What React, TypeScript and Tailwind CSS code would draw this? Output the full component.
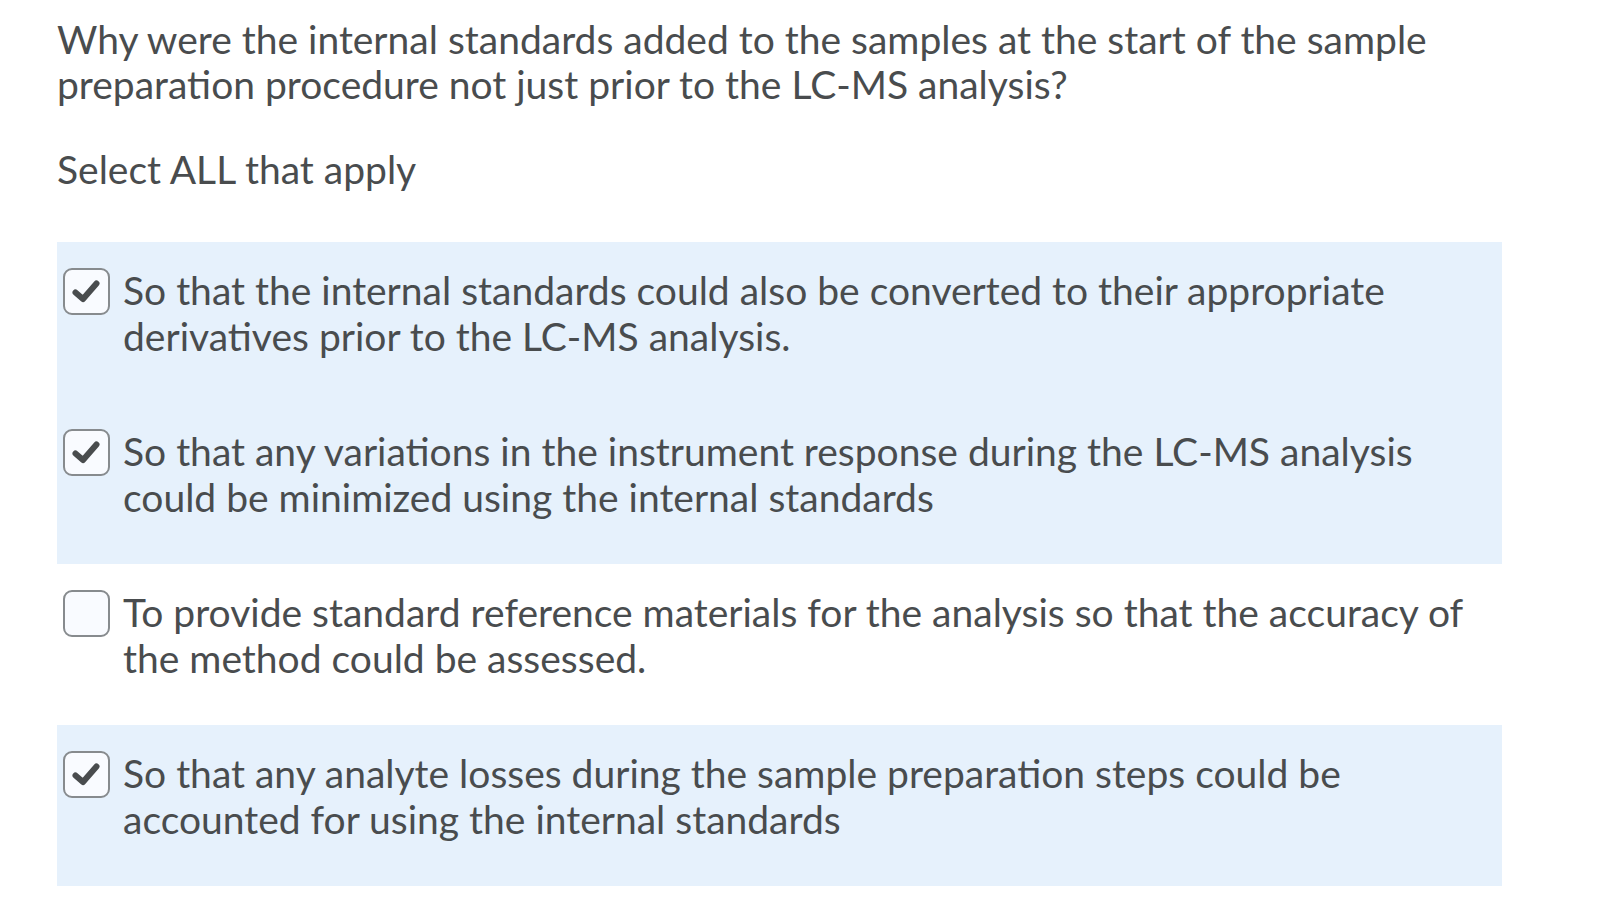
import React from "react";

type Option = { id: string; text: string; checked: boolean };

const options: Option[] = [
  {
    id: "a",
    text: "So that the internal standards could also be converted to their appropriate derivatives prior to the LC-MS analysis.",
    checked: true,
  },
  {
    id: "b",
    text: "So that any variations in the instrument response during the LC-MS analysis could be minimized using the internal standards",
    checked: true,
  },
  {
    id: "c",
    text: "To provide standard reference materials for the analysis so that the accuracy of the method could be assessed.",
    checked: false,
  },
  {
    id: "d",
    text: "So that any analyte losses during the sample preparation steps could be accounted for using the internal standards",
    checked: true,
  },
];

function CheckBox({ checked }: { checked: boolean }) {
  return (
    <div className="w-[47px] h-[47px] shrink-0 rounded-[9px] border-2 border-[#878b8e] bg-[#f9fbff] flex items-center justify-center">
      {checked && (
        <svg width="47" height="47" viewBox="0 0 47 47" className="shrink-0">
          <path
            d="M12.5 24.5 L20 31 L33.5 15.5"
            fill="none"
            stroke="#494c4e"
            strokeWidth="6"
            strokeLinecap="round"
            strokeLinejoin="round"
          />
        </svg>
      )}
    </div>
  );
}

export default function App() {
  return (
    <div
      className="min-h-screen bg-white text-[#494c4e] pl-[57px] pt-[17px]"
      style={{ fontFamily: "Lato, 'Open Sans', sans-serif" }}
    >
      <div className="w-[1445px]">
        <p className="text-[39px] leading-[45px] pr-[40px]">
          Why were the internal standards added to the samples at the start of the sample preparation procedure not just
          prior to the LC-MS analysis?
        </p>
        <p className="text-[39px] leading-[45px] mt-[40px]">Select ALL that apply</p>

        <div className="mt-[50px] flex flex-col">
          {options.map((o) => (
            <label
              key={o.id}
              className={`flex items-start gap-[13px] h-[161px] pl-[6px] pr-[12px] pt-[26px] ${
                o.checked ? "bg-[#e6f1fc]" : "bg-white"
              }`}
            >
              <CheckBox checked={o.checked} />
              <span className="text-[39px] leading-[46px] -mt-[1px]">{o.text}</span>
            </label>
          ))}
        </div>
      </div>
    </div>
  );
}
